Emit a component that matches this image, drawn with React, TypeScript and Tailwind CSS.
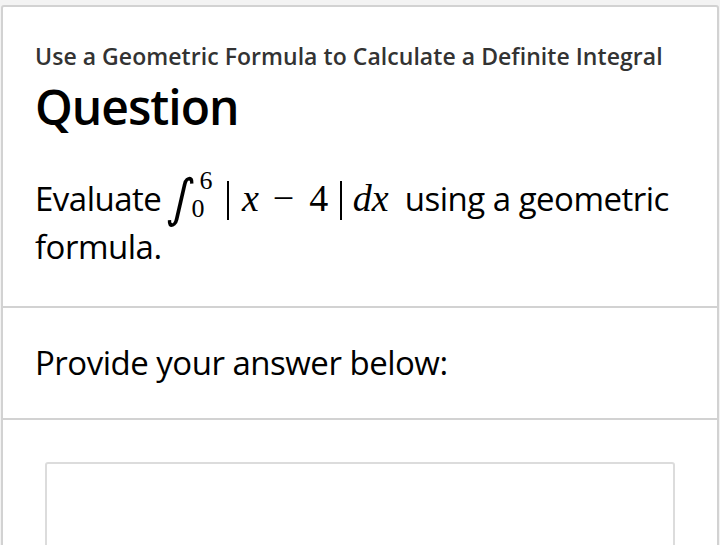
export default function App() {
  return (
    <div className="h-[545px] bg-[#f3f3f3] pt-[5px] pl-px pr-px overflow-hidden">
      <div className="h-[560px] rounded-t-[3px] border-2 border-[#d2d2d2] bg-white font-['Open_Sans',sans-serif]">
        {/* header + question */}
        <div className="h-[301px] border-b-2 border-[#d2d2d2] px-8 pt-[34px]">
          <p className="text-[23px] leading-[30px] font-semibold tracking-[0.05px] text-[#333]">
            Use a Geometric Formula to Calculate a Definite Integral
          </p>
          <h1 className="mt-[8px] text-[48px] leading-[56px] font-semibold tracking-[-1px] text-black">Question</h1>
          <p className="mt-[40px] text-[33px] leading-[47px] tracking-[-0.5px] text-black">
            Evaluate{" "}
            <span className="font-['Liberation_Serif',serif] text-[38px] leading-none tracking-normal">
              <span className="ml-[2px] inline-block w-[21px] -skew-x-12 scale-x-[1.15] scale-y-[1.3] font-['DejaVu_Sans',sans-serif] text-[40px] leading-none italic align-[-1px]">∫</span>
              <span className="-ml-[1px] -mt-[20px] inline-block w-[22px] text-[26px] leading-[28px] align-[-6px]">
                <span className="block pl-[8px]">6</span>
                <span className="block">0</span>
              </span>
              <span className="ml-[14px] inline-block h-[39px] w-[1.5px] bg-black align-[-9px]" />
              <span className="ml-[13px] italic">x</span>
              <span className="ml-[14px]">−</span>
              <span className="ml-[15px]">4</span>
              <span className="ml-[12px] inline-block h-[39px] w-[1.5px] bg-black align-[-9px]" />
              <span className="ml-[11px] mr-[8px] italic">dx</span>
            </span>{" "}
            using a geometric formula.
          </p>
        </div>
        {/* prompt */}
        <div className="h-[112px] border-b-2 border-[#d2d2d2] px-8 flex items-center">
          <p className="text-[33px] tracking-[-0.5px] text-black">Provide your answer below:</p>
        </div>
        {/* answer */}
        <div className="px-[42px] pt-[42px]">
          <div className="h-[120px] rounded-[3px] border-2 border-[#dcdcdc] bg-white" />
        </div>
      </div>
    </div>
  );
}
